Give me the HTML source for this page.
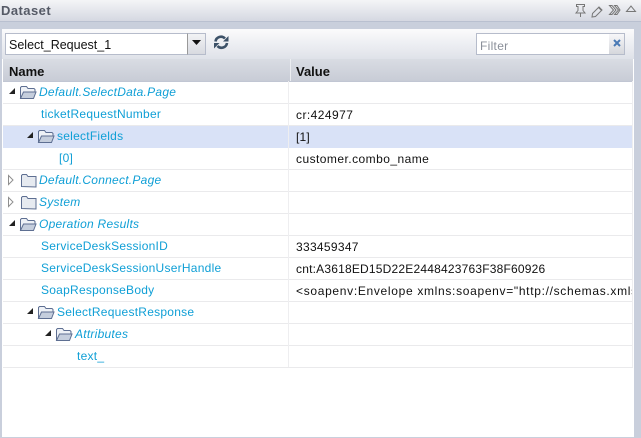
<!DOCTYPE html>
<html><head><meta charset="utf-8">
<style>
html,body{margin:0;padding:0;background:#fff}
#p{position:relative;width:641px;height:438px;overflow:hidden;background:#c9cfdc;font-family:"Liberation Sans",sans-serif;font-size:12px;color:#111}
.a{position:absolute}
.r{position:absolute;left:3px;height:21px;width:630px;border-bottom:1px solid #eaeaec}
.t{position:absolute;white-space:nowrap;line-height:14px;letter-spacing:.25px}
.n{color:#0f9fd6}
.i{font-style:italic}
.v{left:296px;color:#111;letter-spacing:.2px}
svg{position:absolute;overflow:visible}
</style></head><body><div id="p">
<div class="a" style="left:0;top:0;width:641px;height:21px;background:linear-gradient(#f4f5f7,#d5d8e2);border-bottom:1px solid #b9c0d0"></div>
<div class="a" style="left:1px;top:3px;font:bold 13px 'Liberation Sans',sans-serif;color:#555a66;line-height:16px;letter-spacing:.45px">Dataset</div>
<svg style="left:575px;top:4px" width="62" height="14" fill="none" stroke="#777" stroke-width="1">
<path d="M1.500.500h8v2h-1.500v4l2 2.500h-9l2-2.500v-4h-1.500zM5.500 9v4"/>
<path d="M17.500 9.500l-.5 3.500 3.500-.5 6-6-3-3zM22.500 4.500l1.500-1.500 3 3-1.500 1.500"/>
<path d="M34.500 1.500l4 4.500-4 4.500h2.500l4-4.500-4-4.500zM39.500 1.500l4 4.500-4 4.500h2.500l3-4.500-3-4.500z"/>
<path d="M51.500 7.500l4.500-5.500 4.500 5.500z"/>
</svg>
<div class="a" style="left:2px;top:29px;width:632px;height:30px;background:linear-gradient(#fbfbfc,#dfe2e9)"></div>
<div class="a" style="left:5px;top:33px;width:181px;height:20px;background:#fff;border:1px solid #b6bccb"></div>
<div class="a" style="left:9px;top:38px;font-size:12.500px;line-height:14px;color:#111">Select_Request_1</div>
<div class="a" style="left:187px;top:33px;width:17px;height:20px;background:linear-gradient(#f2f3f5,#d8dae0);border:1px solid #b6bccb;border-left:1px solid #999"></div>
<svg style="left:192px;top:40px" width="10" height="6"><path d="M0 0h9l-4.500 5z" fill="#111"/></svg>
<svg style="left:214px;top:35px" width="15" height="15" fill="none" stroke="#3d5268" stroke-width="2.600"><path d="M1.500 6.500a5.500 5.500 0 0 1 9.500-3"/><path d="M13 8a5.500 5.500 0 0 1-9.500 3"/><path d="M9 6.500h5.500v-5.500z" fill="#3d5268" stroke="none"/><path d="M5.500 8h-5.500v5.500z" fill="#3d5268" stroke="none"/></svg>
<div class="a" style="left:476px;top:33px;width:132px;height:20px;background:#fff;border:1px solid #b6bccb"></div>
<div class="a" style="left:480px;top:39px;color:#8a8f99;line-height:14px;letter-spacing:.3px">Filter</div>
<div class="a" style="left:609px;top:33px;width:15px;height:20px;background:linear-gradient(#f7f7f9,#d5d7dc);border:1px solid #b6bccb;border-left:0"></div>
<svg style="left:613px;top:39px" width="8" height="8" stroke="#4a7ab5" stroke-width="2"><path d="M1 1l6 6M7 1l-6 6"/></svg>

<div class="a" style="left:2px;top:59px;width:632px;height:378px;background:#fff"></div>
<div class="a" style="left:3px;top:59px;width:630px;height:22px;background:linear-gradient(#d9dce3,#c8ccd6);border-bottom:1px solid #c1c6d3"></div>
<div class="a" style="left:290px;top:59px;width:1px;height:22px;background:#eceef2"></div>
<div class="a" style="left:9px;top:64px;font-weight:bold;font-size:13px;line-height:15px;color:#111">Name</div>
<div class="a" style="left:296px;top:64px;font-weight:bold;font-size:13px;line-height:15px;color:#111">Value</div>

<div class="a" style="left:3px;top:125px;width:630px;height:23px;background:#d9e2f7"></div>
<div class="r" style="top:82px"></div><div class="r" style="top:104px"></div><div class="r" style="top:126px;border-color:transparent"></div><div class="r" style="top:148px"></div><div class="r" style="top:170px"></div><div class="r" style="top:192px"></div><div class="r" style="top:214px"></div><div class="r" style="top:236px"></div><div class="r" style="top:258px"></div><div class="r" style="top:280px"></div><div class="r" style="top:302px"></div><div class="r" style="top:324px"></div><div class="r" style="top:346px"></div>
<div class="a" style="left:288px;top:81px;width:1px;height:286px;background:#eeeef0"></div>
<div class="a" style="left:632px;top:81px;width:1px;height:286px;background:#eeeef0"></div>

<svg width="0" height="0"><defs>
<g id="o"><path d="M.500 13.500v-11l1-1h5l1.500 2h6l1 1v2.500" fill="#eef1f6" stroke="#5e6f92"/><path d="M.500 13.500l3-6.500h12.500l-2.500 6.500z" fill="#c5cedd" stroke="#5e6f92"/></g>
<g id="c"><path d="M.500 13.500v-11l1-1h4l1.500 2h8v10.500z" fill="#e6eaf0" stroke="#5e6f92"/></g>
<path id="d" d="M0 6l6-6v6z" fill="#222"/>
<path id="e" d="M.500.500l4.500 4.500-4.500 4.500z" fill="#fff" stroke="#8f8f8f"/>
</defs></svg>

<svg style="left:9px;top:88px" width="8" height="8"><use href="#d"/></svg>
<svg style="left:20px;top:85px" width="18" height="15"><use href="#o"/></svg>
<div class="t n i" style="left:39px;top:85px">Default.SelectData.Page</div>

<div class="t n" style="left:41px;top:107px">ticketRequestNumber</div>
<div class="t v" style="top:108px;letter-spacing:.45px">cr:424977</div>

<svg style="left:27px;top:132px" width="8" height="8"><use href="#d"/></svg>
<svg style="left:38px;top:129px" width="18" height="15"><use href="#o"/></svg>
<div class="t n" style="left:57px;top:129px">selectFields</div>
<div class="t v" style="top:130px">[1]</div>

<div class="t n" style="left:59px;top:151px">[0]</div>
<div class="t v" style="top:152px;letter-spacing:.45px">customer.combo_name</div>

<svg style="left:8px;top:175px" width="7" height="11"><use href="#e"/></svg>
<svg style="left:21px;top:173px" width="18" height="15"><use href="#c"/></svg>
<div class="t n i" style="left:39px;top:173px">Default.Connect.Page</div>

<svg style="left:8px;top:197px" width="7" height="11"><use href="#e"/></svg>
<svg style="left:21px;top:195px" width="18" height="15"><use href="#c"/></svg>
<div class="t n i" style="left:39px;top:195px">System</div>

<svg style="left:9px;top:220px" width="8" height="8"><use href="#d"/></svg>
<svg style="left:20px;top:217px" width="18" height="15"><use href="#o"/></svg>
<div class="t n i" style="left:39px;top:217px">Operation Results</div>

<div class="t n" style="left:41px;top:239px">ServiceDeskSessionID</div>
<div class="t v" style="top:240px;letter-spacing:.3px">333459347</div>
<div class="t n" style="left:41px;top:261px">ServiceDeskSessionUserHandle</div>
<div class="t v" style="top:262px">cnt:A3618ED15D22E2448423763F38F60926</div>
<div class="t n" style="left:41px;top:283px">SoapResponseBody</div>
<div class="a" style="left:296px;top:284px;width:336px;height:16px;overflow:hidden"><div class="t" style="left:0;top:0;letter-spacing:.68px">&lt;soapenv:Envelope xmlns:soapenv="http://schemas.xmlsoap.org/soap/envelope/"</div></div>

<svg style="left:27px;top:308px" width="8" height="8"><use href="#d"/></svg>
<svg style="left:38px;top:305px" width="18" height="15"><use href="#o"/></svg>
<div class="t n" style="left:57px;top:305px">SelectRequestResponse</div>

<svg style="left:45px;top:330px" width="8" height="8"><use href="#d"/></svg>
<svg style="left:56px;top:327px" width="18" height="15"><use href="#o"/></svg>
<div class="t n i" style="left:75px;top:327px">Attributes</div>

<div class="t n" style="left:77px;top:349px">text_</div>
</div></body></html>
